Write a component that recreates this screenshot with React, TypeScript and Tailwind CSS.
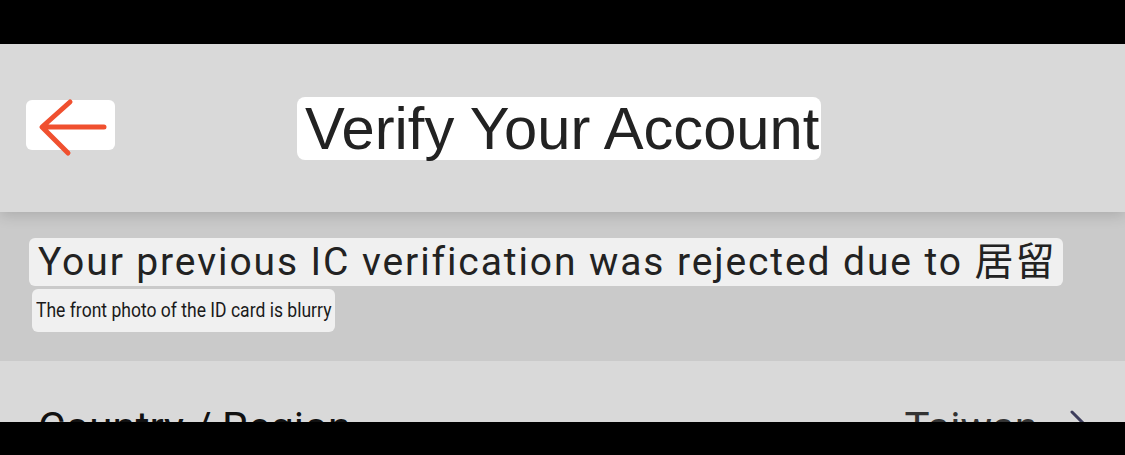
import React from "react";

const BackArrow: React.FC = () => (
  <svg
    width="89"
    height="50"
    viewBox="0 0 89 50"
    className="overflow-visible"
    fill="none"
  >
    <path
      d="M78 27 H17 M44 2 L16 27 L42 53"
      stroke="#f0502f"
      strokeWidth="5"
      strokeLinecap="round"
      strokeLinejoin="round"
    />
  </svg>
);

const App: React.FC = () => {
  return (
    <div className="w-[1125px] h-[455px] flex flex-col bg-black overflow-hidden">
      <div className="h-[44px] shrink-0 bg-black" />

      <div className="flex-1 flex flex-col overflow-hidden bg-[#d9d9d9]">
        {/* header */}
        <header className="relative z-10 h-[168px] shrink-0 bg-[#d9d9d9] shadow-[0_3px_14px_rgba(0,0,0,0.16)] flex items-center">
          <div className="w-[89px] h-[50px] ml-[26px] -mt-[6px] bg-white rounded-[6px] shrink-0">
            <BackArrow />
          </div>
          <h1
            className="ml-[182px] h-[63px] pl-[8px] pr-[2px] bg-white rounded-[8px] text-[59.7px] leading-[63px] text-[#222] whitespace-nowrap"
            style={{ fontFamily: '"Liberation Sans", Arial, sans-serif' }}
          >
            Verify Your Account
          </h1>
        </header>

        {/* rejection notice */}
        <section
          className="h-[149px] shrink-0 bg-[#cacaca] pt-[26px] pl-[29px]"
          style={{ fontFamily: 'Roboto, "Noto Sans CJK TC", sans-serif' }}
        >
          <div className="h-[48px] w-[1034px] pl-[9px] bg-[#f0f0f0] rounded-[6px] text-[39px] tracking-[1.9px] leading-[48px] text-[#222] whitespace-nowrap overflow-hidden">
            Your previous IC verification was rejected due to 居留
          </div>
          <div className="mt-[3px] ml-[3px] h-[43px] w-[303px] pl-[4px] bg-[#f0f0f0] rounded-[6px] overflow-hidden flex items-center">
            <span className="inline-block origin-left scale-x-[0.835] text-[21px] leading-none text-[#1a1a1a] whitespace-nowrap">
              The front photo of the ID card is blurry
            </span>
          </div>
        </section>

        {/* country row */}
        <div
          className="flex items-start justify-between pt-[42px] pl-[38px] pr-[35px] text-[42px] leading-[50px]"
          style={{ fontFamily: 'Roboto, "Noto Sans", sans-serif' }}
        >
          <span className="text-[#111]">Country / Region</span>
          <span className="flex items-start gap-[30px] text-[#333]">
            Taiwan
            <svg
              width="22"
              height="34"
              viewBox="0 0 22 34"
              fill="none"
              className="mt-[6px]"
            >
              <path
                d="M4 3 L18 17 L4 31"
                stroke="#3d3d5c"
                strokeWidth="3"
                strokeLinecap="round"
                strokeLinejoin="round"
              />
            </svg>
          </span>
        </div>
      </div>

      <div className="h-[33px] shrink-0 bg-black" />
    </div>
  );
};

export default App;
